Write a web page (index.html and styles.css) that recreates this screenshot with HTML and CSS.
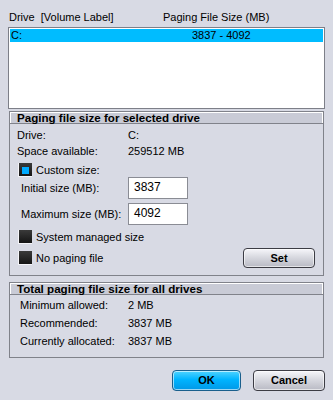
FILE: index.html
```html
<!DOCTYPE html>
<html lang="en">
<head>
    <meta charset="UTF-8">
    <title>Virtual Memory</title>
    <link rel="stylesheet" href="styles.css">
</head>
<body>
    <div class="dialog">
        <div class="cols">
            <span class="col-drive">Drive&nbsp;&nbsp;[Volume Label]</span>
            <span class="col-size">Paging File Size (MB)</span>
        </div>
        <div class="listbox">
            <div class="item selected">
                <span class="col-drive">C:</span>
                <span class="item-size">3837 - 4092</span>
            </div>
        </div>

        <!-- selected drive -->
        <div class="group">
            <div class="group-title">Paging file size for selected drive</div>
            <div class="row info first"><span class="label">Drive:</span><span>C:</span></div>
            <div class="row info"><span class="label">Space available:</span><span>259512 MB</span></div>
            <div class="row check-row custom">
                <span class="check checked"></span><span>Custom size:</span>
            </div>
            <div class="row field-row">
                <span class="label field-label">Initial size (MB):</span>
                <span class="field">3837</span>
            </div>
            <div class="row field-row gap">
                <span class="label field-label">Maximum size (MB):</span>
                <span class="field">4092</span>
            </div>
            <div class="row check-row system">
                <span class="check"></span><span>System managed size</span>
            </div>
            <div class="row check-row nopage">
                <span class="check"></span><span>No paging file</span>
                <a class="btn set" href="javascript:;">Set</a>
            </div>
        </div>

        <!-- all drives -->
        <div class="group total">
            <div class="group-title">Total paging file size for all drives</div>
            <div class="row stat first"><span class="label">Minimum allowed:</span><span>2 MB</span></div>
            <div class="row stat"><span class="label">Recommended:</span><span>3837 MB</span></div>
            <div class="row stat"><span class="label">Currently allocated:</span><span>3837 MB</span></div>
        </div>

        <div class="buttons">
            <a class="btn ok" href="javascript:;">OK</a>
            <a class="btn cancel" href="javascript:;">Cancel</a>
        </div>
    </div>
</body>
</html>
```

FILE: styles.css
```css
*{
    margin: 0;
    padding: 0;
    box-sizing: border-box;
}
body{
    background-color: #d8dae4;
    font-family: "Liberation Sans", Arial, sans-serif;
    font-size: 11px;
    color: #000;
    white-space: nowrap;
}
.dialog{
    padding: 0 8px;
}
.cols{
    display: flex;
    height: 27px;
    padding-top: 11px;
    line-height: 13px;
}
.col-drive{
    display: inline-block;
    width: 155px;
    padding-left: 1px;
}
.listbox{
    height: 82px;
    background-color: #fff;
    border: 1px solid #7d7f88;
    padding: 1px;
}
.item{
    display: flex;
    height: 13px;
    line-height: 13px;
}
.item.selected{
    background-color: #00bcff;
}
.item .col-drive{
    width: 182px;
}
.group{
    margin: 2px 1px 0 1px;
    border: 1px solid #80828a;
    border-top: none;
    padding-bottom: 7px;
}
.group.total{
    margin-top: 6px;
}
.group-title{
    height: 13px;
    margin: 0 -1px;
    border: 1px solid #80828a;
    box-shadow: inset 1px 1px 0 #fff, inset -1px 0 0 #fff;
    background-color: #c9cbd6;
    font-weight: bold;
    font-size: 11.6px;
    line-height: 11px;
    padding-left: 7px;
}
.row{
    display: flex;
    align-items: center;
}
.label{
    flex: none;
    width: 118px;
    padding-left: 7px;
}
.info{
    height: 16px;
}
.info.first{
    margin-top: 3px;
}
.stat{
    height: 18px;
}
.stat.first{
    margin-top: 1px;
}
.stat .label{
    padding-left: 10px;
}
.check-row{
    padding-left: 8px;
}
.check{
    display: inline-block;
    flex: none;
    width: 14px;
    height: 14px;
    margin-right: 4px;
    background: linear-gradient(#3a3a3a, #151515);
    border-left: 1px solid #f4f4f8;
    border-bottom: 1px solid #f4f4f8;
    position: relative;
}
.check.checked::after{
    content: "";
    position: absolute;
    left: 3px;
    top: 4px;
    width: 7px;
    height: 7px;
    background-color: #00aaff;
}
.custom{
    margin-top: 3px;
    height: 15px;
}
.field-row{
    height: 22px;
}
.field-row.gap{
    margin-top: 4px;
}
.field-label{
    padding-left: 11px;
}
.field{
    display: block;
    width: 60px;
    height: 22px;
    background-color: #fff;
    border: 1px solid #8a8c94;
    padding: 3px 0 0 5px;
    line-height: 13px;
    font-size: 12px;
}
.system{
    margin-top: 4px;
    height: 16px;
}
.nopage{
    margin-top: 3px;
    height: 20px;
}
.btn{
    display: block;
    height: 21px;
    line-height: 19px;
    text-align: center;
    font-weight: bold;
    color: #000;
    text-decoration: none;
    border: 1px solid #3c3c44;
    border-radius: 4px;
    background: linear-gradient(#f6f6fa, #d8d9e0 45%, #b9bac4);
    box-shadow: inset 0 0 0 1px rgba(255,255,255,0.6);
}
.set{
    margin-left: auto;
    margin-right: 8px;
    width: 72px;
    height: 20px;
}
.buttons{
    display: flex;
    justify-content: flex-end;
    margin-top: 12px;
    gap: 12px;
}
.ok{
    width: 69px;
    background: linear-gradient(#50d4ff, #00b4ff 45%, #0098e6);
    border-color: #1a5f8c;
}
.cancel{
    width: 72px;
}
```
